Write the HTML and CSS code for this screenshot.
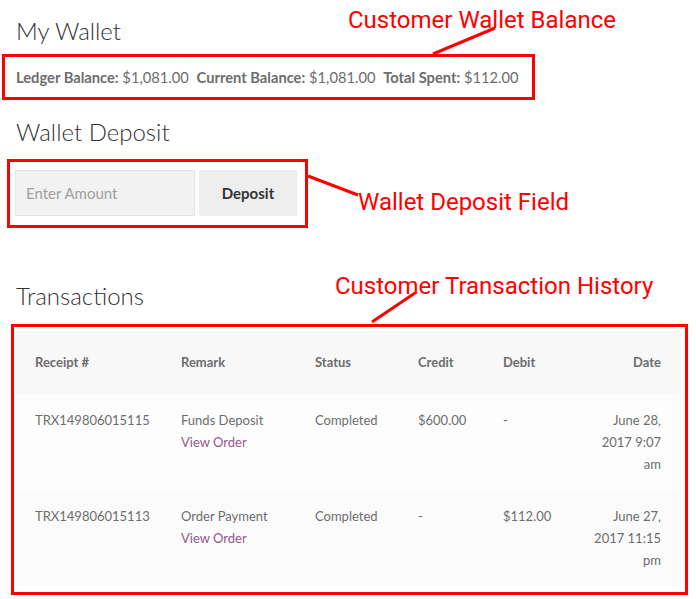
FILE: index.html
```html
<!DOCTYPE html>
<html lang="en">

<head>
    <meta charset="UTF-8">
    <meta name="viewport" content="width=device-width, initial-scale=1.0">
    <title>My Wallet</title>
    <link rel="stylesheet" href="styles.css">
</head>

<body>
    <div class="page">
        <h2 class="title title-wallet">My Wallet</h2>
        <div class="mark mark-balance">
            <span class="balance"><strong>Ledger Balance:</strong> $1,081.00</span>
            <span class="balance"><strong>Current Balance:</strong> $1,081.00</span>
            <span class="balance"><strong>Total Spent:</strong> $112.00</span>
        </div>

        <h2 class="title title-deposit">Wallet Deposit</h2>
        <form class="mark mark-deposit">
            <input type="text" class="amount" placeholder="Enter Amount">
            <button type="button" class="deposit-btn">Deposit</button>
        </form>

        <h2 class="title title-transactions">Transactions</h2>
        <div class="mark mark-table">
            <table class="transactions">
                <colgroup>
                    <col class="col-receipt">
                    <col class="col-remark">
                    <col class="col-status">
                    <col class="col-credit">
                    <col class="col-debit">
                    <col class="col-date">
                </colgroup>
                <thead>
                    <tr>
                        <th>Receipt #</th>
                        <th>Remark</th>
                        <th>Status</th>
                        <th>Credit</th>
                        <th>Debit</th>
                        <th class="date">Date</th>
                    </tr>
                </thead>
                <tbody>
                    <tr>
                        <td>TRX149806015115</td>
                        <td>Funds Deposit<br><a href="#">View Order</a></td>
                        <td>Completed</td>
                        <td>$600.00</td>
                        <td>-</td>
                        <td class="date">June 28, 2017 9:07 am</td>
                    </tr>
                    <tr>
                        <td>TRX149806015113</td>
                        <td>Order Payment<br><a href="#">View Order</a></td>
                        <td>Completed</td>
                        <td>-</td>
                        <td>$112.00</td>
                        <td class="date">June 27, 2017 11:15 pm</td>
                    </tr>
                </tbody>
            </table>
        </div>

        <!-- annotations -->
        <span class="note note-balance">Customer Wallet Balance</span>
        <span class="note note-deposit">Wallet Deposit Field</span>
        <span class="note note-history">Customer Transaction History</span>
        <svg class="pointers" width="696" height="599" viewBox="0 0 696 599">
            <line x1="433" y1="54" x2="495" y2="28" />
            <line x1="308" y1="176" x2="358" y2="195" />
            <line x1="372" y1="322" x2="415" y2="293" />
        </svg>
    </div>
</body>

</html>
```

FILE: styles.css
```css
body {
    margin: 0;
    font-family: Lato, "Liberation Sans", sans-serif;
    font-size: 13px;
    color: #6d6d6d;
    background: #fff;
}

.page {
    position: relative;
    width: 696px;
    height: 599px;
    overflow: hidden;
}

.title {
    margin: 0;
    padding-left: 16px;
    font-size: 24px;
    font-weight: 300;
    line-height: 32px;
    color: #333;
}

.title-wallet {
    padding-top: 15px;
}

.title-deposit {
    margin-top: 16px;
}

.title-transactions {
    margin-top: 52px;
}

.mark {
    border: 3px solid #f00;
    box-sizing: border-box;
}

.mark-balance {
    width: 533px;
    height: 46px;
    margin: 7px 0 0 2px;
    padding: 10px 11px;
    font-size: 14.7px;
    line-height: 20px;
    white-space: nowrap;
}

.balance {
    margin-right: 4px;
}

.balance strong {
    font-weight: 700;
}

.mark-deposit {
    display: flex;
    gap: 4px;
    width: 301px;
    height: 69px;
    margin: 11px 0 0 7px;
    padding: 8px 8px 9px 5px;
}

.amount {
    width: 180px;
    height: 46px;
    box-sizing: border-box;
    margin: 0;
    padding: 0 10px;
    border: 1px solid #e4e4e4;
    background: #f2f2f2;
    font-family: inherit;
    font-size: 15px;
    color: #6d6d6d;
    outline: none;
}

.amount::placeholder {
    color: #a0a0a0;
}

.deposit-btn {
    width: 98px;
    height: 46px;
    margin: 0;
    border: none;
    background: #eee;
    font-family: inherit;
    font-size: 15px;
    font-weight: 700;
    color: #333;
}

.mark-table {
    width: 677px;
    height: 271px;
    margin: 12px 0 0 11px;
    padding: 4px 4px 6px 1px;
}

.transactions {
    width: 666px;
    border-collapse: collapse;
    table-layout: fixed;
}

.col-receipt { width: 146px; }
.col-remark { width: 134px; }
.col-status { width: 103px; }
.col-credit { width: 85px; }
.col-debit { width: 86px; }
.col-date { width: 112px; }

.transactions th,
.transactions td {
    text-align: left;
    vertical-align: top;
    line-height: 22px;
}

.transactions th {
    padding: 20px 20px 21px;
    background: #f8f8f8;
    font-weight: 700;
}

.transactions td {
    padding: 15px 20px;
    background: #fdfdfd;
}

.transactions tbody tr:nth-child(2n) td {
    background: #fbfbfb;
}

.transactions .date {
    text-align: right;
}

.transactions a {
    color: #96588a;
    text-decoration: none;
}

.note {
    position: absolute;
    font-family: Roboto, sans-serif;
    font-size: 24px;
    line-height: 28px;
    color: #f00;
    white-space: nowrap;
}

.note-balance {
    left: 348px;
    top: 6px;
}

.note-deposit {
    left: 358px;
    top: 188px;
}

.note-history {
    left: 335px;
    top: 272px;
}

.pointers {
    position: absolute;
    left: 0;
    top: 0;
    stroke: #f00;
    stroke-width: 3;
}
```
